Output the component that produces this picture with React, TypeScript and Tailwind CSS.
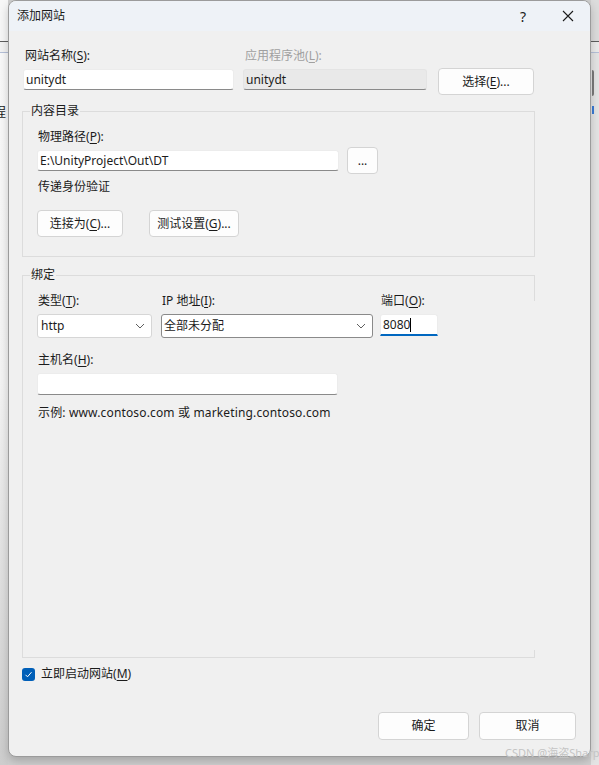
import React from "react";

const font = { fontFamily: '"Noto Sans", "Noto Sans CJK SC", sans-serif' };

function Chevron() {
  return (
    <svg width="10" height="6" viewBox="0 0 10 6" className="shrink-0">
      <path d="M1 1l4 4 4-4" fill="none" stroke="#5f5f5f" strokeWidth="1" />
    </svg>
  );
}

// label with an underlined access key, e.g. 网站名称(S):
function Label({ text, k, tail = "):", dim = false }: { text: string; k: string; tail?: string; dim?: boolean }) {
  return (
    <div className={`h-[18px] leading-[18px] text-[12px] whitespace-nowrap ${dim ? "text-[#a0a0a0]" : "text-[#1b1b1b]"}`}>
      {text}(<span className="underline underline-offset-2">{k}</span>
      {tail}
    </div>
  );
}

function TextBox({ value, className = "" }: { value: string; className?: string }) {
  return (
    <div
      className={`h-[21px] bg-white border border-[#ececec] border-b-[#8a8a8a] rounded-[3px] px-[2px] flex items-center text-[12px] text-[#1b1b1b] ${className}`}
    >
      {value}
    </div>
  );
}

function Btn({ label, className = "" }: { label: React.ReactNode; className?: string }) {
  return (
    <div
      className={`h-[27px] bg-[#fdfdfd] border border-[#d4d4d4] rounded-[4px] flex items-center justify-center text-[12px] text-[#1b1b1b] ${className}`}
    >
      {label}
    </div>
  );
}

function Group({ title, children, className = "" }: { title: string; children: React.ReactNode; className?: string }) {
  return (
    <fieldset className={`border border-[#dcdcdc] ${className}`}>
      <legend className="ml-[7px] px-[1px] h-[18px] leading-[18px] text-[12px] text-[#1b1b1b]">{title}</legend>
      {children}
    </fieldset>
  );
}

export default function App() {
  return (
    <div className="relative w-[599px] h-[765px] overflow-hidden flex bg-[#cfcfcf]" style={font}>
      {/* window behind, left edge */}
      <div className="w-[8px] h-full flex flex-col bg-gradient-to-b from-[#fafafa] via-[#f4f4f4] to-[#cdcdcd] overflow-hidden">
        <div className="h-[41px] bg-[#f7f7f7]" />
        <div className="h-[1px] bg-[#5e5e5e]" />
        <div className="h-[10px] bg-[#f3f3f3]" />
        <div className="h-[1px] bg-[#b5c0d8]" />
        <div className="h-[50px]" />
        <div className="-ml-[7px] text-[13px] leading-[16px] text-[#1b1b1b] whitespace-nowrap">程</div>
      </div>

      {/* dialog */}
      <div className="w-[583px] flex flex-col">
        <div className="relative h-[757px] flex flex-col bg-[#f0f0f0] border border-[#9b9b9b] rounded-[8px] overflow-hidden shadow-[0_4px_10px_rgba(0,0,0,0.2)]">
          {/* title bar */}
          <div className="h-[30px] shrink-0 bg-[#eef2f7] flex items-center pl-[8px] text-[12px] text-[#1b1b1b]">
            <span>添加网站</span>
            <span className="ml-auto w-[14px] text-center text-[14px]">?</span>
            <svg width="12" height="12" viewBox="0 0 12 12" className="ml-[32px] mr-[16px]">
              <path d="M1 1l10 10M11 1L1 11" stroke="#1b1b1b" strokeWidth="1.1" />
            </svg>
          </div>

          <div className="flex flex-col pl-[13px] pt-[16px]">
            {/* site name / app pool */}
            <div className="flex pl-[1px]">
              <div className="w-[211px] flex flex-col">
                <div className="pl-[2px]"><Label text="网站名称" k="S" /></div>
                <TextBox value="unitydt" className="mt-[4px]" />
              </div>
              <div className="ml-[9px] w-[184px] flex flex-col">
                <div className="pl-[2px]"><Label text="应用程序池" k="L" dim /></div>
                <div className="mt-[4px] h-[21px] bg-[#e9e9e9] border border-[#e4e4e4] border-b-[#8a8a8a] rounded-[3px] px-[2px] flex items-center text-[12px] text-[#1b1b1b]">
                  unitydt
                </div>
              </div>
              <Btn label={<span>选择(<span className="underline underline-offset-2">E</span>)...</span>} className="ml-[11px] mt-[21px] w-[96px]" />
            </div>

            {/* content directory */}
            <Group title="内容目录" className="mt-[7px] w-[513px]">
              <div className="flex flex-col pl-[14px] pt-[8px] pb-[19px]">
                <div className="pl-[1px]"><Label text="物理路径" k="P" /></div>
                <div className="mt-[1px] flex items-center">
                  <TextBox value="E:\UnityProject\Out\DT" className="w-[302px]" />
                  <Btn label="..." className="ml-[8px] w-[31px]" />
                </div>
                <div className="mt-[4px] pl-[1px] h-[18px] leading-[18px] text-[12px] text-[#1b1b1b]">传递身份验证</div>
                <div className="mt-[14px] flex">
                  <Btn label={<span>连接为(<span className="underline underline-offset-2">C</span>)...</span>} className="w-[86px]" />
                  <Btn label={<span>测试设置(<span className="underline underline-offset-2">G</span>)...</span>} className="ml-[26px] w-[90px]" />
                </div>
              </div>
            </Group>

            {/* bindings */}
            <Group title="绑定" className="relative mt-[9px] w-[513px]">
              <div className="flex flex-col pl-[14px] pt-[8px] h-[373px]">
                <div className="flex">
                  <div className="w-[115px] flex flex-col">
                    <div className="pl-[1px]"><Label text="类型" k="T" /></div>
                    <div className="mt-[4px] h-[24px] bg-white border border-[#d6d6d6] rounded-[3px] pl-[3px] pr-[6px] flex items-center text-[12px] text-[#1b1b1b]">
                      <span>http</span>
                      <span className="ml-auto"><Chevron /></span>
                    </div>
                  </div>
                  <div className="ml-[9px] w-[212px] flex flex-col">
                    <div className="pl-[1px] h-[18px] leading-[18px] text-[12px] text-[#1b1b1b] whitespace-nowrap">
                      IP 地址(<span className="underline underline-offset-2">I</span>):
                    </div>
                    <div className="mt-[4px] h-[24px] bg-white border border-[#8a8a8a] rounded-[3px] pl-[2px] pr-[6px] flex items-center text-[12px] text-[#1b1b1b]">
                      <span>全部未分配</span>
                      <span className="ml-auto"><Chevron /></span>
                    </div>
                  </div>
                  <div className="ml-[7px] w-[58px] flex flex-col">
                    <div className="pl-[1px]"><Label text="端口" k="O" /></div>
                    <div className="mt-[4px] h-[22px] bg-white border border-[#ececec] border-b-2 border-b-[#0067c0] rounded-t-[3px] pl-[2px] flex items-center text-[12px] text-[#1b1b1b]">
                      <span>8080</span>
                      <span className="w-[1px] h-[14px] bg-black" />
                    </div>
                  </div>
                </div>
                <div className="mt-[13px] pl-[1px]"><Label text="主机名" k="H" /></div>
                <div className="mt-[4px] h-[22px] w-[301px] bg-white border border-[#ececec] border-b-[#8a8a8a] rounded-[3px]" />
                <div className="mt-[9px] pl-[1px] h-[18px] leading-[18px] text-[12px] text-[#1b1b1b] whitespace-nowrap tracking-[0.15px]">
                  示例: www.contoso.com 或 marketing.contoso.com
                </div>
              </div>
              {/* right edge of the group box is not painted between the top and bottom corners */}
              <div className="absolute right-[-1px] top-[17px] bottom-[7px] w-[1px] bg-[#f0f0f0]" />
            </Group>

            {/* start immediately */}
            <div className="mt-[9px] flex items-center h-[14px]">
              <div className="w-[13px] h-[13px] rounded-[3px] bg-[#005fb8] flex items-center justify-center">
                <svg width="9" height="9" viewBox="0 0 9 9">
                  <path d="M1.5 4.8l2 2 4-4.6" fill="none" stroke="#fff" strokeWidth="1" />
                </svg>
              </div>
              <div className="ml-[6px]"><Label text="立即启动网站" k="M" tail=")" /></div>
            </div>

            {/* dialog buttons */}
            <div className="mt-[31px] flex justify-end pr-[14px]">
              <Btn label="确定" className="w-[91px] h-[28px] border-[#0067c0]" />
              <Btn label="取消" className="ml-[10px] w-[97px] h-[28px]" />
            </div>
          </div>
        </div>
      </div>

      {/* window behind, right edge */}
      <div className="w-[8px] h-full flex flex-col bg-[#e4e4e4]">
        <div className="h-[41px] bg-[#dcdcdc]" />
        <div className="h-[1px] bg-[#5e5e5e]" />
        <div className="h-[10px] bg-[#ebebeb]" />
        <div className="h-[1px] bg-[#b5c0d8]" />
        <div className="h-[17px]" />
        <div className="h-[26px] w-[2px] ml-[1px] bg-[#7a7a7a] rounded-r-[2px]" />
        <div className="h-[10px]" />
        <div className="h-[8px] w-[2px] ml-[1px] bg-[#3a7bd5]" />
      </div>

      {/* watermark */}
      <div className="absolute left-[505px] top-[745px] text-[11px] leading-[16px] text-[#c4c4c4] whitespace-nowrap">
        CSDN @海盗Sharp
      </div>
    </div>
  );
}
